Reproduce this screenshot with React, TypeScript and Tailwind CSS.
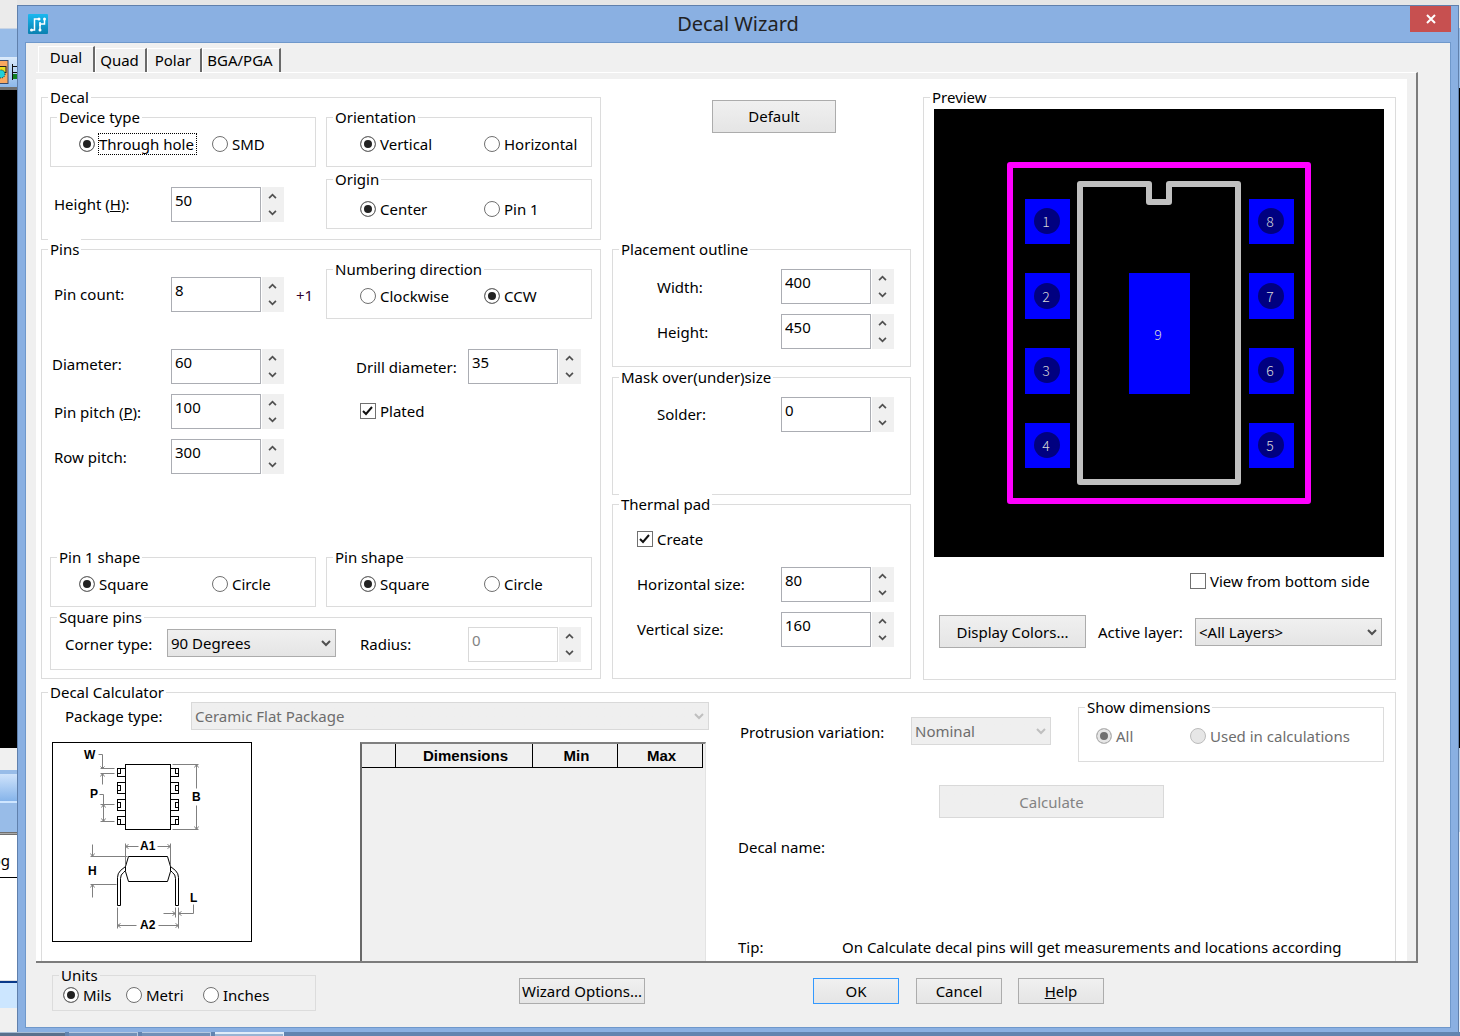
import React, { useId } from "react";

const FONT = "font-['Noto_Sans','Open_Sans',sans-serif]";

function Chevron({ up = false, className = "h-[7px] w-[10px]" }: { up?: boolean; className?: string }) {
  return (
    <svg viewBox="0 0 10 7" className={className} fill="none" stroke="currentColor" strokeWidth="2">
      <path d={up ? "M1 6 L5 2 L9 6" : "M1 1 L5 5 L9 1"} />
    </svg>
  );
}

function Group({ title, className = "", children }: { title: string; className?: string; children?: React.ReactNode }) {
  return (
    <fieldset className={`min-w-0 border border-[#dcdcdc] ${className}`}>
      <legend className="ml-[6px] px-[2px] leading-5 whitespace-nowrap">{title}</legend>
      {children}
    </fieldset>
  );
}

type RadioProps = {
  name: string;
  label: string;
  checked?: boolean;
  disabled?: boolean;
  focused?: boolean;
  className?: string;
};

function Radio({ name, label, checked, disabled, focused, className = "" }: RadioProps) {
  return (
    <label className={`flex h-5 items-center gap-1 whitespace-nowrap ${disabled ? "text-[#6d6d6d]" : ""} ${className}`}>
      <input
        type="radio"
        name={name}
        defaultChecked={checked}
        disabled={disabled}
        className="size-4 shrink-0 appearance-none rounded-full border border-[#707070] bg-white checked:bg-[#222222] checked:shadow-[inset_0_0_0_3px_#ffffff] disabled:border-[#bcbcbc] disabled:bg-[#e6e6e6] disabled:checked:bg-[#707070] disabled:checked:shadow-[inset_0_0_0_3px_#e6e6e6]"
      />
      <span className={focused ? "pr-[2px] outline-1 outline-dotted outline-black" : ""}>{label}</span>
    </label>
  );
}

function Check({ label, checked, className = "" }: { label: string; checked?: boolean; className?: string }) {
  return (
    <label className={`flex h-5 items-center gap-1 whitespace-nowrap ${className}`}>
      <span className="relative size-4 shrink-0">
        <input type="checkbox" defaultChecked={checked} className="peer block size-4 appearance-none border border-[#707070] bg-white" />
        <svg viewBox="0 0 16 16" className="pointer-events-none absolute inset-0 hidden size-4 peer-checked:block" fill="none" stroke="#111111" strokeWidth="2">
          <path d="M3 8 L6 11 L12 4" />
        </svg>
      </span>
      {label}
    </label>
  );
}

function Spin({ id, value, disabled }: { id: string; value: string; disabled?: boolean }) {
  return (
    <div className="flex gap-px">
      <input
        id={id}
        type="text"
        defaultValue={value}
        disabled={disabled}
        className="h-[35px] w-[90px] border border-[#abadb3] bg-white px-[3px] pb-[9px] disabled:border-[#d9d9d9] disabled:text-[#838383]"
      />
      <div className="flex h-[35px] w-[22px] flex-col bg-[#f0f0f0] text-[#505050]">
        <button type="button" aria-label="Increase" disabled={disabled} className="flex flex-1 items-center justify-center pr-px">
          <Chevron up className="h-[6px] w-[9px]" />
        </button>
        <button type="button" aria-label="Decrease" disabled={disabled} className="flex flex-1 items-center justify-center pr-px">
          <Chevron className="h-[6px] w-[9px]" />
        </button>
      </div>
    </div>
  );
}

type SpinRowProps = {
  label: React.ReactNode;
  value: string;
  labelClass: string;
  className?: string;
  disabled?: boolean;
  children?: React.ReactNode;
};

function SpinRow({ label, value, labelClass, className = "", disabled, children }: SpinRowProps) {
  const id = useId();
  return (
    <div className={`flex items-center ${className}`}>
      <label htmlFor={id} className={`shrink-0 whitespace-nowrap ${labelClass}`}>
        {label}
      </label>
      <Spin id={id} value={value} disabled={disabled} />
      {children}
    </div>
  );
}

function Combo({ id, value, disabled, className = "" }: { id: string; value: string; disabled?: boolean; className?: string }) {
  return (
    <div className={`relative ${className}`}>
      <select
        id={id}
        disabled={disabled}
        className="block h-7 w-full appearance-none border border-[#acacac] bg-linear-to-b from-[#f0f0f0] to-[#e5e5e5] pr-5 pl-[3px] disabled:border-[#d9d9d9] disabled:from-[#efefef] disabled:to-[#efefef] disabled:text-[#6d6d6d] disabled:opacity-100"
      >
        <option>{value}</option>
      </select>
      <Chevron
        className={`pointer-events-none absolute top-[11px] right-[5px] h-[7px] w-[10px] ${disabled ? "text-[#bfbfbf]" : "text-[#505050]"}`}
      />
    </div>
  );
}

function Button({ className = "", disabled, children }: { className?: string; disabled?: boolean; children: React.ReactNode }) {
  return (
    <button
      type="button"
      disabled={disabled}
      className={`shrink-0 border bg-linear-to-b from-[#f0f0f0] to-[#e5e5e5] whitespace-nowrap disabled:border-[#d9d9d9] disabled:from-[#efefef] disabled:to-[#efefef] disabled:text-[#838383] ${className}`}
    >
      {children}
    </button>
  );
}

const PADS = [
  { n: 1, x: 91, y: 90, h: 45, cy: 112 },
  { n: 2, x: 91, y: 164, h: 46, cy: 187 },
  { n: 3, x: 91, y: 239, h: 46, cy: 261 },
  { n: 4, x: 91, y: 314, h: 45, cy: 336 },
  { n: 5, x: 315, y: 314, h: 45, cy: 336 },
  { n: 6, x: 315, y: 239, h: 46, cy: 261 },
  { n: 7, x: 315, y: 164, h: 46, cy: 187 },
  { n: 8, x: 315, y: 90, h: 45, cy: 112 },
];

function PreviewDrawing() {
  return (
    <svg viewBox="0 0 450 448" className="block w-full bg-black" role="img" aria-label="Decal preview">
      <rect x="76" y="56" width="298" height="336" fill="none" stroke="#ff00ff" strokeWidth="6" strokeLinejoin="round" />
      <path d="M215 75 H146 V373 H304 V75 H235 V93 H215 Z" fill="none" stroke="#c0c0c0" strokeWidth="6" strokeLinejoin="round" />
      <rect x="195" y="164" width="61" height="121" fill="#0000ff" />
      <g fontFamily="'Liberation Sans Narrow', 'Noto Sans CJK SC', sans-serif" fontWeight="300" fontSize="14" fill="#d8d8d8" textAnchor="middle">
        {PADS.map((p) => (
          <g key={p.n}>
            <rect x={p.x} y={p.y} width="45" height={p.h} fill="#0000ff" />
            <circle cx={p.x + 22} cy={p.cy} r="13" fill="#000080" />
            <text x={p.x + 21} y={p.cy + 6}>
              {p.n}
            </text>
          </g>
        ))}
        <text x="224" y="231">
          9
        </text>
      </g>
    </svg>
  );
}

const LEADS = [
  { y: 26, h: 8, iy: 26, ih: 5 },
  { y: 40, h: 11, iy: 43, ih: 5 },
  { y: 57, h: 11, iy: 60, ih: 5 },
  { y: 74, h: 8, iy: 77, ih: 5 },
];

function PackageDrawing() {
  return (
    <svg viewBox="0 0 200 200" className="size-[200px] shrink-0" fill="none" role="img" aria-label="Package dimensions">
      <rect x="0.5" y="0.5" width="199" height="199" stroke="#000" />
      <g transform="translate(0.5 0.5)">
        <g stroke="#808080">
          <path d="M46 12 H50 V26 M48 24 L50 26 L52 24 M48 26 H62 M48 31 H62 M50 42 V31 M48 34 L50 31 L52 34" />
          <path d="M47 52 H51 V79 M48 62 H62 M48 79 H62 M49 65 L51 62 L53 65 M49 76 L51 79 L53 76" />
          <path d="M120 22 H146 M120 87 H146 M144 22 V46 M144 63 V87 M142 25 L144 22 L146 25 M142 84 L144 87 L146 84" />
          <path d="M73 101 V122 M118 101 V122 M73 104 H86 M105 104 H118 M76 102 L73 104 L76 106 M115 102 L118 104 L115 106" />
          <path d="M38 114 H75 M40 102 V114 M38 111 L40 114 L42 111 M38 142 H64 M40 155 V142 M38 145 L40 142 L42 145" />
          <path d="M65 165 V186 M126 165 V186 M65 183 H84 M106 183 H126 M68 181 L65 183 L68 185 M123 181 L126 183 L123 185" />
          <path d="M123 165 V175 M111 171 H123 M120 169 L123 171 L120 173 M126 171 H141 V162 M129 169 L126 171 L129 173" />
        </g>
        <g stroke="#000">
          <rect x="73" y="22" width="45" height="65" />
          {LEADS.map((l) => (
            <g key={l.y}>
              <rect x="65" y={l.y} width="8" height={l.h} />
              <rect x="65" y={l.iy} width="3" height={l.ih} />
              <rect x="118" y={l.y} width="8" height={l.h} />
              <rect x="123" y={l.iy} width="3" height={l.ih} />
            </g>
          ))}
          <path d="M76 114 H115 L118 124 V129 L115 139 H76 L73 129 V124 Z" />
          <path d="M73 124 L68 128 Q65 131 65 135 V163 H68 V136 Q68 132 71 130 L73 128" />
          <path d="M118 124 L123 128 Q126 131 126 135 V163 H123 V136 Q123 132 120 130 L118 128" />
        </g>
      </g>
      <g fontFamily="Liberation Sans, sans-serif" fontWeight="700" fontSize="12" fill="#000">
        <text x="32" y="17">W</text>
        <text x="38" y="56">P</text>
        <text x="140" y="59">B</text>
        <text x="88" y="108">A1</text>
        <text x="36" y="133">H</text>
        <text x="138" y="160">L</text>
        <text x="88" y="187">A2</text>
      </g>
    </svg>
  );
}

function AppIcon() {
  return (
    <svg viewBox="0 0 20 20" className="size-5">
      <defs>
        <linearGradient id="appIcon" x1="0" y1="0" x2="0" y2="1">
          <stop offset="0" stopColor="#1ab8f0" />
          <stop offset="1" stopColor="#0a80b0" />
        </linearGradient>
      </defs>
      <rect width="20" height="20" rx="1" fill="url(#appIcon)" />
      <g fill="none" stroke="#fff" strokeWidth="1.5">
        <path d="M3 16 H6.500 V5 H11" />
        <path d="M12 16 V10 H16.500 V6" />
        <path d="M12 8 V12" />
      </g>
      <g fill="#fff">
        <circle cx="3.500" cy="16" r="1.500" />
        <circle cx="11" cy="5" r="1.500" />
        <circle cx="12" cy="16" r="1.500" />
        <circle cx="16.500" cy="5" r="1.500" />
      </g>
    </svg>
  );
}

function BackgroundLeft() {
  return (
    <div className="flex w-[17px] shrink-0 flex-col overflow-hidden">
      <div className="h-7 bg-[#ebebeb]" />
      <div className="h-[29px] border-t border-[#c8d4e4] bg-[#98bce8]" />
      <div className="flex h-[30px] items-center bg-linear-to-b from-[#dcebfb] to-[#8db8ea]">
        <svg viewBox="0 0 17 24" className="h-6 w-[17px]">
          <rect x="-4" y="0.5" width="12" height="23" fill="#f9a860" stroke="#3a4a6a" />
          <rect x="-1" y="6.500" width="7" height="6" fill="#e8e020" stroke="#222" />
          <circle cx="1" cy="14" r="4" fill="#20d0d8" stroke="#222" strokeDasharray="1 1" />
          <path d="M12.500 4 V20 M12 6.500 H17 M12 12.500 H17" stroke="#111" fill="none" />
          <rect x="13" y="14" width="4" height="5" fill="#108020" />
        </svg>
      </div>
      <div className="h-[3px] bg-[#707070]" />
      <div className="h-[658px] bg-black" />
      <div className="h-[22px] bg-[#f0f0f0]" />
      <div className="h-[33px] border-t-4 border-b-2 border-t-[#98bce8] border-b-[#cfe6ff] bg-linear-to-b from-[#cfe3fb] to-[#86b4ea]" />
      <div className="h-[29px] bg-[#98bce8]" />
      <div className="h-[3px] border-y border-[#707070] bg-[#a8a8a8]" />
      <div className="flex h-[43px] items-center border-b border-black bg-white pt-2">
        <div className="flex w-[10px] justify-end overflow-hidden">og</div>
      </div>
      <div className="h-[103px] border-b border-[#e0e0e0] bg-white" />
      <div className="h-[27px] border-t-2 border-[#0a3a8a] bg-[#cce6ff]" />
      <div className="flex-1 bg-[#f0f0f0]" />
    </div>
  );
}

function BackgroundRight() {
  return (
    <div className="flex w-px shrink-0 flex-col">
      <div className="h-7 bg-[#ebebeb]" />
      <div className="h-[60px] bg-[#98bce8]" />
      <div className="h-[660px] bg-black" />
      <div className="h-[84px] bg-[#b8cfe8]" />
      <div className="flex-1 bg-[#e8eef6]" />
    </div>
  );
}

function Tabs() {
  const tab = "border-t border-l border-t-white border-l-white border-r-2 border-r-[#696969] bg-[#f0f0f0] whitespace-nowrap";
  return (
    <div role="tablist" className="flex h-[29px] items-end pl-[2px]">
      <button type="button" role="tab" aria-selected="true" className={`h-[26px] w-[57px] pb-[5px] ${tab}`}>
        Dual
      </button>
      <button type="button" role="tab" aria-selected="false" className={`h-6 w-[52px] pr-[2px] pb-[2px] ${tab}`}>
        Quad
      </button>
      <button type="button" role="tab" aria-selected="false" className={`h-6 w-[55px] pr-[2px] pb-[2px] ${tab}`}>
        Polar
      </button>
      <button type="button" role="tab" aria-selected="false" className={`h-6 w-[79px] pr-[2px] pb-[2px] ${tab}`}>
        BGA/PGA
      </button>
    </div>
  );
}

function DecalGroup() {
  return (
    <Group title="Decal">
      <div className="grid grid-cols-2 gap-x-[10px] px-2 pb-[10px]">
        <div>
          <Group title="Device type">
            <div className="flex pt-[7px] pb-3 pl-7">
              <Radio name="device" label="Through hole" checked focused className="w-[133px]" />
              <Radio name="device" label="SMD" />
            </div>
          </Group>
          <SpinRow
            className="mt-5 pl-1"
            labelClass="w-[117px] pb-[2px]"
            label={
              <>
                Height (<u>H</u>):
              </>
            }
            value="50"
          />
        </div>
        <div>
          <Group title="Orientation">
            <div className="flex pt-[7px] pb-3 pl-[33px]">
              <Radio name="orientation" label="Vertical" checked className="w-[124px]" />
              <Radio name="orientation" label="Horizontal" />
            </div>
          </Group>
          <Group title="Origin" className="mt-[2px]">
            <div className="flex pt-[10px] pb-[9px] pl-[33px]">
              <Radio name="origin" label="Center" checked className="w-[124px]" />
              <Radio name="origin" label="Pin 1" />
            </div>
          </Group>
        </div>
      </div>
    </Group>
  );
}

function PinsGroup() {
  const corner = useId();
  return (
    <Group title="Pins" className="-mt-px [&>legend]:bg-white">
      <div className="grid grid-cols-2 gap-x-[10px] px-2 pb-2">
        <div>
          <SpinRow className="mt-[18px] pl-1" labelClass="w-[117px] pb-[2px]" label="Pin count:" value="8">
            <span className="ml-3 text-[#300030]">+1</span>
          </SpinRow>
          <SpinRow className="mt-[37px] pl-[2px]" labelClass="w-[119px] pb-[6px]" label="Diameter:" value="60" />
          <SpinRow
            className="mt-[10px] pl-1"
            labelClass="w-[117px]"
            label={
              <>
                Pin pitch (<u>P</u>):
              </>
            }
            value="100"
          />
          <SpinRow className="mt-[10px] pl-1" labelClass="w-[117px]" label="Row pitch:" value="300" />
        </div>
        <div>
          <Group title="Numbering direction">
            <div className="flex pt-[7px] pb-3 pl-[33px]">
              <Radio name="numbering" label="Clockwise" className="w-[124px]" />
              <Radio name="numbering" label="CCW" checked />
            </div>
          </Group>
          <SpinRow className="mt-[30px] pl-[30px]" labelClass="w-[112px]" label="Drill diameter:" value="35" />
          <Check label="Plated" checked className="mt-[17px] ml-[34px]" />
        </div>
        <Group title="Pin 1 shape" className="mt-[73px]">
          <div className="flex pt-[7px] pb-3 pl-7">
            <Radio name="pin1shape" label="Square" checked className="w-[133px]" />
            <Radio name="pin1shape" label="Circle" />
          </div>
        </Group>
        <Group title="Pin shape" className="mt-[73px]">
          <div className="flex pt-[7px] pb-3 pl-[33px]">
            <Radio name="pinshape" label="Square" checked className="w-[124px]" />
            <Radio name="pinshape" label="Circle" />
          </div>
        </Group>
        <Group title="Square pins" className="col-span-2">
          <div className="flex items-center pb-[7px] pl-[14px]">
            <label htmlFor={corner} className="w-[102px] pb-[2px] whitespace-nowrap">
              Corner type:
            </label>
            <Combo id={corner} value="90 Degrees" className="w-[169px] pb-[3px]" />
            <SpinRow className="ml-6" labelClass="w-[108px] pb-[2px]" label="Radius:" value="0" disabled />
          </div>
        </Group>
      </div>
    </Group>
  );
}

function OutlineColumn() {
  return (
    <div className="pr-px">
      <div className="pt-[13px] pb-[106px] pl-[100px]">
        <Button className="block h-[33px] w-[124px] border-[#acacac] pb-[2px]">Default</Button>
      </div>
      <Group title="Placement outline">
        <div className="flex flex-col gap-[10px] pt-[10px] pb-[17px] pl-[44px]">
          <SpinRow labelClass="w-[124px]" label="Width:" value="400" />
          <SpinRow labelClass="w-[124px]" label="Height:" value="450" />
        </div>
      </Group>
      <Group title="Mask over(under)size">
        <SpinRow className="pt-[10px] pb-[62px] pl-[44px]" labelClass="w-[124px] pb-[2px]" label="Solder:" value="0" />
      </Group>
      <Group title="Thermal pad" className="-mt-px [&>legend]:bg-white">
        <div className="flex flex-col gap-[10px] pt-[15px] pb-[31px] pl-6">
          <Check label="Create" checked className="mb-2" />
          <SpinRow labelClass="w-[144px] pb-[2px]" label="Horizontal size:" value="80" />
          <SpinRow labelClass="w-[144px] pb-[2px]" label="Vertical size:" value="160" />
        </div>
      </Group>
    </div>
  );
}

function PreviewGroup() {
  const layer = useId();
  return (
    <Group title="Preview">
      <div className="pt-[2px] pr-[11px] pb-[31px] pl-[10px]">
        <PreviewDrawing />
        <Check label="View from bottom side" className="mt-[14px] mr-[6px] ml-auto w-[188px]" />
        <div className="mt-6 flex items-center pr-[2px] pl-[5px]">
          <Button className="h-[33px] w-[147px] border-[#acacac]">Display Colors...</Button>
          <label htmlFor={layer} className="ml-3 w-[97px] shrink-0 whitespace-nowrap">
            Active layer:
          </label>
          <Combo id={layer} value="<All Layers>" className="flex-1" />
        </div>
      </div>
    </Group>
  );
}

function CalculatorGroup() {
  const pack = useId();
  const variation = useId();
  const cell = "h-6 border-r border-b border-black bg-[#f0f0f0]";
  return (
    <Group title="Decal Calculator" className="mt-[2px] border-b-0">
      <div className="flex">
        <div className="w-[667px] shrink-0">
          <div className="flex items-center pl-[23px]">
            <label htmlFor={pack} className="w-[126px] whitespace-nowrap">
              Package type:
            </label>
            <Combo id={pack} value="Ceramic Flat Package" disabled className="flex-1" />
          </div>
          <div className="mt-3 flex justify-between pr-[3px] pl-[10px]">
            <div className="pb-[19px]">
              <PackageDrawing />
            </div>
            <div className="w-[346px] border-t-2 border-r border-l-2 border-t-[#808080] border-r-[#e3e3e3] border-l-[#696969] bg-[#f0f0f0] pr-[2px]">
              <table className="w-full table-fixed border-separate border-spacing-0 font-['Liberation_Sans',sans-serif] font-bold">
                <colgroup>
                  <col className="w-[34px]" />
                  <col className="w-[137px]" />
                  <col className="w-[85px]" />
                  <col className="w-[85px]" />
                </colgroup>
                <thead>
                  <tr>
                    <th className={cell} aria-label="Row" />
                    <th className={`pl-[3px] ${cell}`}>Dimensions</th>
                    <th className={`pl-[3px] ${cell}`}>Min</th>
                    <th className={`pl-[3px] ${cell}`}>Max</th>
                  </tr>
                </thead>
              </table>
            </div>
          </div>
        </div>
        <div className="min-w-0 flex-1 pl-[29px]">
          <div className="flex">
            <label htmlFor={variation} className="mt-5 w-[173px] shrink-0 pl-[2px] whitespace-nowrap">
              Protrusion variation:
            </label>
            <Combo id={variation} value="Nominal" disabled className="mt-[15px] w-[140px] shrink-0" />
            <Group title="Show dimensions" className="-mt-[5px] mr-[11px] ml-[27px] flex-1">
              <div className="flex pt-[9px] pb-[15px] pl-[17px]">
                <Radio name="show" label="All" checked disabled className="w-[94px]" />
                <Radio name="show" label="Used in calculations" disabled />
              </div>
            </Group>
          </div>
          <Button disabled className="mt-[23px] ml-[201px] block h-[33px] w-[225px]">
            Calculate
          </Button>
          <p className="mt-[19px]">Decal name:</p>
          <p className="mt-20 flex whitespace-nowrap">
            <span className="w-[104px]">Tip:</span>
            <span>On Calculate decal pins will get measurements and locations according</span>
          </p>
        </div>
      </div>
    </Group>
  );
}

function Footer() {
  return (
    <div className="flex flex-1 items-start pt-[2px] pl-[26px]">
      <Group title="Units" className="w-[264px]">
        <div className="flex pb-[5px] pl-[10px]">
          <Radio name="units" label="Mils" checked className="w-[63px]" />
          <Radio name="units" label="Metri" className="w-[77px]" />
          <Radio name="units" label="Inches" />
        </div>
      </Group>
      <div className="mt-[13px] ml-[203px] flex">
        <Button className="h-[26px] w-[126px] border-[#acacac]">Wizard Options...</Button>
        <Button className="ml-[168px] h-[26px] w-[86px] border-[#3399ff]">OK</Button>
        <Button className="ml-[17px] h-[26px] w-[86px] border-[#acacac]">Cancel</Button>
        <Button className="ml-4 h-[26px] w-[86px] border-[#acacac]">
          <u>H</u>elp
        </Button>
      </div>
    </div>
  );
}

function Dialog() {
  return (
    <section className="flex flex-1 flex-col border-x border-t border-[#6080ac] bg-[#8ab0e2] px-[7px] pb-1">
      <header className="flex h-9 items-start">
        <div className="w-[41px] pt-2 pl-[3px]">
          <AppIcon />
        </div>
        <h1 className="flex-1 text-center text-[20px] leading-9 text-[#222222]">Decal Wizard</h1>
        <button type="button" aria-label="Close" className="flex h-[26px] w-[41px] items-center justify-center bg-[#c75050]">
          <svg viewBox="0 0 12 10" className="h-[10px] w-3" stroke="#fff" strokeWidth="2">
            <path d="M2 1 L10 9 M10 1 L2 9" />
          </svg>
        </button>
      </header>
      <div className="flex flex-1 flex-col border border-[#6f98cb] bg-[#f0f0f0]">
        <div className="mr-8 ml-[10px]">
          <Tabs />
          <div className="border-t border-r-2 border-b-2 border-t-white border-r-[#7c7c7c] border-b-[#7c7c7c] pt-[6px] pr-[9px]">
            <div className="bg-white pt-2 pr-[11px] pl-[5px]">
              <div className="grid grid-cols-[560fr_300fr_473fr] gap-x-[11px]">
                <div>
                  <DecalGroup />
                  <PinsGroup />
                </div>
                <OutlineColumn />
                <PreviewGroup />
              </div>
              <CalculatorGroup />
            </div>
          </div>
        </div>
        <Footer />
      </div>
    </section>
  );
}

export default function App() {
  return (
    <div className={`flex min-h-screen flex-col text-[15px] leading-5 text-black ${FONT}`}>
      <div className="flex flex-1">
        <BackgroundLeft />
        <div className="flex min-w-0 flex-1 flex-col">
          <div className="h-[5px] bg-[#e6e6e6]" />
          <Dialog />
        </div>
        <BackgroundRight />
      </div>
      <div className="flex h-1 gap-1 bg-[#6284b0]">
        <div className="w-[65px] border-t border-[#a8bcd4] bg-[#5a708c]" />
        <div className="w-[69px] border-t border-r border-[#b4c8e0] bg-[#7090b8]" />
        <div className="w-[69px] border-t border-r border-[#b4c8e0] bg-[#7090b8]" />
        <div className="w-[69px] border-t-2 border-r border-[#e0ecf8] bg-[#98b4d4]" />
      </div>
    </div>
  );
}
